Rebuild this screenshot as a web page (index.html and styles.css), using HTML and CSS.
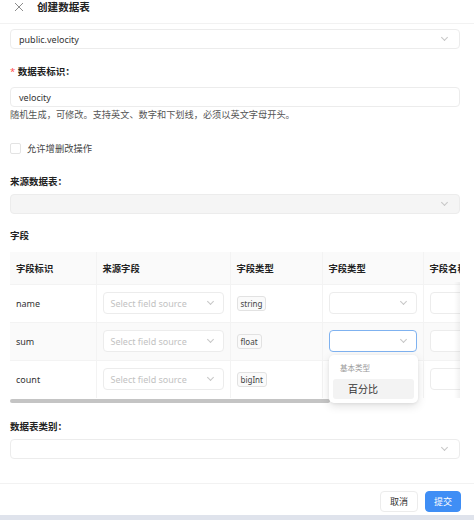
FILE: index.html
```html
<!DOCTYPE html>
<html lang="zh-CN">
<head>
  <meta charset="UTF-8">
  <title>创建数据表</title>
  <link rel="stylesheet" href="styles.css">
</head>
<body>
  <div class="modal">
    <header class="modal-header">
      <span class="close">
        <svg width="10" height="10" viewBox="0 0 10 10"><path d="M1 1L9 9M9 1L1 9" stroke="#8c8c8c" stroke-width="1" fill="none"/></svg>
      </span>
      <h1>创建数据表</h1>
    </header>

    <main class="modal-body">
      <div class="select first">
        <span class="value">public.velocity</span>
        <span class="arrow"></span>
      </div>

      <div class="label label-name"><span class="req">*</span> 数据表标识：</div>
      <div class="input"><span class="value">velocity</span></div>
      <p class="help">随机生成，可修改。支持英文、数字和下划线，必须以英文字母开头。</p>

      <label class="check-row">
        <span class="checkbox"></span>
        <span>允许增删改操作</span>
      </label>

      <div class="label label-source">来源数据表：</div>
      <div class="select disabled"><span class="arrow"></span></div>

      <div class="label label-fields">字段</div>
      <div class="table-wrap">
        <table class="fields">
          <colgroup>
            <col style="width:86px">
            <col style="width:134px">
            <col style="width:92px">
            <col style="width:101px">
            <col style="width:100px">
          </colgroup>
          <thead>
            <tr>
              <th>字段标识</th>
              <th>来源字段</th>
              <th>字段类型</th>
              <th>字段类型</th>
              <th>字段名称</th>
            </tr>
          </thead>
          <tbody>
            <tr>
              <td>name</td>
              <td><div class="select small"><span class="placeholder">Select field source</span><span class="arrow"></span></div></td>
              <td><span class="tag">string</span></td>
              <td><div class="select small"><span class="arrow"></span></div></td>
              <td><div class="input small"></div></td>
            </tr>
            <tr class="hover">
              <td>sum</td>
              <td><div class="select small"><span class="placeholder">Select field source</span><span class="arrow"></span></div></td>
              <td><span class="tag">float</span></td>
              <td><div class="select small focused"><span class="arrow"></span></div></td>
              <td><div class="input small"></div></td>
            </tr>
            <tr>
              <td>count</td>
              <td><div class="select small"><span class="placeholder">Select field source</span><span class="arrow"></span></div></td>
              <td><span class="tag">bigInt</span></td>
              <td><div class="select small"><span class="arrow"></span></div></td>
              <td><div class="input small"></div></td>
            </tr>
          </tbody>
        </table>
        <div class="scrollbar"><div class="thumb"></div></div>
      </div>

      <div class="label label-kind">数据表类别：</div>
      <div class="select"><span class="arrow"></span></div>
    </main>

    <footer class="modal-footer">
      <button class="btn">取消</button>
      <button class="btn primary">提交</button>
    </footer>

    <div class="dropdown">
      <div class="group-title">基本类型</div>
      <div class="option active">百分比</div>
    </div>
  </div>
  <div class="backdrop-strip"></div>
</body>
</html>
```

FILE: styles.css
```css
* {
  margin: 0;
  box-sizing: border-box;
}
body {
  background: #fff;
  font-family: "Noto Sans", "Noto Sans CJK SC", sans-serif;
  font-size: 9.3px;
  color: #333;
  overflow: hidden;
}
.modal {
  position: relative;
  display: flow-root;
  height: 515px;
  background: #fff;
}

/* header */
.modal-header {
  display: flex;
  align-items: center;
  height: 34px;
  margin-top: -10px;
  padding: 0 14px;
  border-bottom: 1px solid #f2f2f2;
}
.close {
  display: flex;
  width: 10px;
  height: 10px;
  margin-right: 13px;
}
.modal-header h1 {
  font-size: 10.6px;
  font-weight: 700;
  color: #222;
}

/* body */
.modal-body {
  padding: 5px 14px 0 10px;
}
.select, .input {
  position: relative;
  display: flex;
  align-items: center;
  height: 20px;
  padding: 0 8px;
  border: 1px solid #ececec;
  border-radius: 4px;
  background: #fff;
  color: #333;
  font-size: 9px;
}
.select.disabled {
  background: #f5f5f5;
  border-color: #ececec;
}
.arrow {
  position: absolute;
  right: 12px;
  top: 5px;
  width: 5px;
  height: 5px;
  border-right: 1px solid #c6c6c6;
  border-bottom: 1px solid #c6c6c6;
  transform: rotate(45deg);
}
.label {
  font-size: 9.5px;
  font-weight: 700;
  color: #222;
  line-height: 14px;
}
.req {
  color: #ff4d4f;
  font-weight: 400;
}
.label-name { margin-top: 16px; }
.label-name + .input { margin-top: 8px; }
.help {
  margin-top: 1px;
  line-height: 14px;
  color: #555;
  font-size: 9.2px;
}
.check-row {
  display: flex;
  align-items: center;
  gap: 6px;
  margin-top: 19px;
  height: 14px;
  color: #444;
}
.checkbox {
  width: 11px;
  height: 11px;
  border: 1px solid #e3e3e3;
  border-radius: 2px;
}
.label-source { margin-top: 20px; }
.label-source + .select { margin-top: 5px; }
.label-fields { margin-top: 15px; }

/* fields table */
.table-wrap {
  position: relative;
  margin-top: 9px;
  overflow: hidden;
}
.table-wrap::after {
  content: "";
  position: absolute;
  right: 0;
  top: 30px;
  bottom: 6px;
  width: 6px;
  background: linear-gradient(to left, rgba(0,0,0,0.05), rgba(0,0,0,0));
}
.fields {
  width: 513px;
  table-layout: fixed;
  border-collapse: collapse;
}
.fields th {
  height: 32px;
  padding: 0 6px;
  background: #fafafa;
  text-align: left;
  font-weight: 700;
  color: #222;
  border-right: 1px solid #f3f3f3;
  white-space: nowrap;
  overflow: hidden;
}
.fields td {
  height: 38px;
  padding: 0 6px;
  border-top: 1px solid #f3f3f3;
  border-right: 1px solid #f3f3f3;
  white-space: nowrap;
  overflow: hidden;
  font-size: 9px;
}
.fields tr.hover td {
  background: #fafafa;
}
.select.small {
  height: 22px;
  padding: 0 7px;
}
.select.small .arrow {
  right: 10px;
  top: 6px;
}
.select.focused {
  border-color: #7fb2f0;
}
.input.small {
  height: 22px;
  width: 40px;
}
.placeholder {
  color: #c2c2c2;
}
.tag {
  display: inline-block;
  padding: 0 3px;
  line-height: 13px;
  font-size: 8px;
  color: #444;
  background: #fafafa;
  border: 1px solid #e2e2e2;
  border-radius: 3px;
}
.scrollbar {
  height: 6px;
  padding-top: 1px;
}
.thumb {
  width: 320px;
  height: 4px;
  border-radius: 2px;
  background: #c4c4c4;
}

.label-kind { margin-top: 16px; }
.label-kind + .select { margin-top: 5px; }

/* footer */
.modal-footer {
  position: absolute;
  left: 0;
  right: 0;
  bottom: 0;
  height: 32px;
  display: flex;
  justify-content: flex-end;
  align-items: flex-start;
  gap: 7px;
  padding: 7px 13px 0 0;
  border-top: 1px solid #f2f2f2;
}
.btn {
  appearance: none;
  height: 21px;
  padding: 0 9px;
  font-family: inherit;
  font-size: 9px;
  color: #333;
  background: #fff;
  border: 1px solid #ececec;
  border-radius: 4px;
}
.btn.primary {
  padding: 0 8px;
  color: #fff;
  background: #3f8ef5;
  border-color: #3f8ef5;
}

/* open type menu */
.dropdown {
  position: absolute;
  left: 329px;
  top: 355px;
  width: 89px;
  padding: 4px;
  background: #fff;
  border-radius: 5px;
  box-shadow: 0 3px 10px rgba(0,0,0,0.12), 0 1px 3px rgba(0,0,0,0.06);
}
.group-title {
  padding: 2px 7px 0;
  line-height: 14px;
  font-size: 7.5px;
  color: #999;
}
.option {
  margin-top: 4px;
  height: 20px;
  line-height: 20px;
  padding-left: 15px;
  font-size: 10px;
  color: #333;
  border-radius: 3px;
}
.option.active {
  background: #f3f3f3;
}

.backdrop-strip {
  height: 5px;
  background: #dfe3ec;
}
```
